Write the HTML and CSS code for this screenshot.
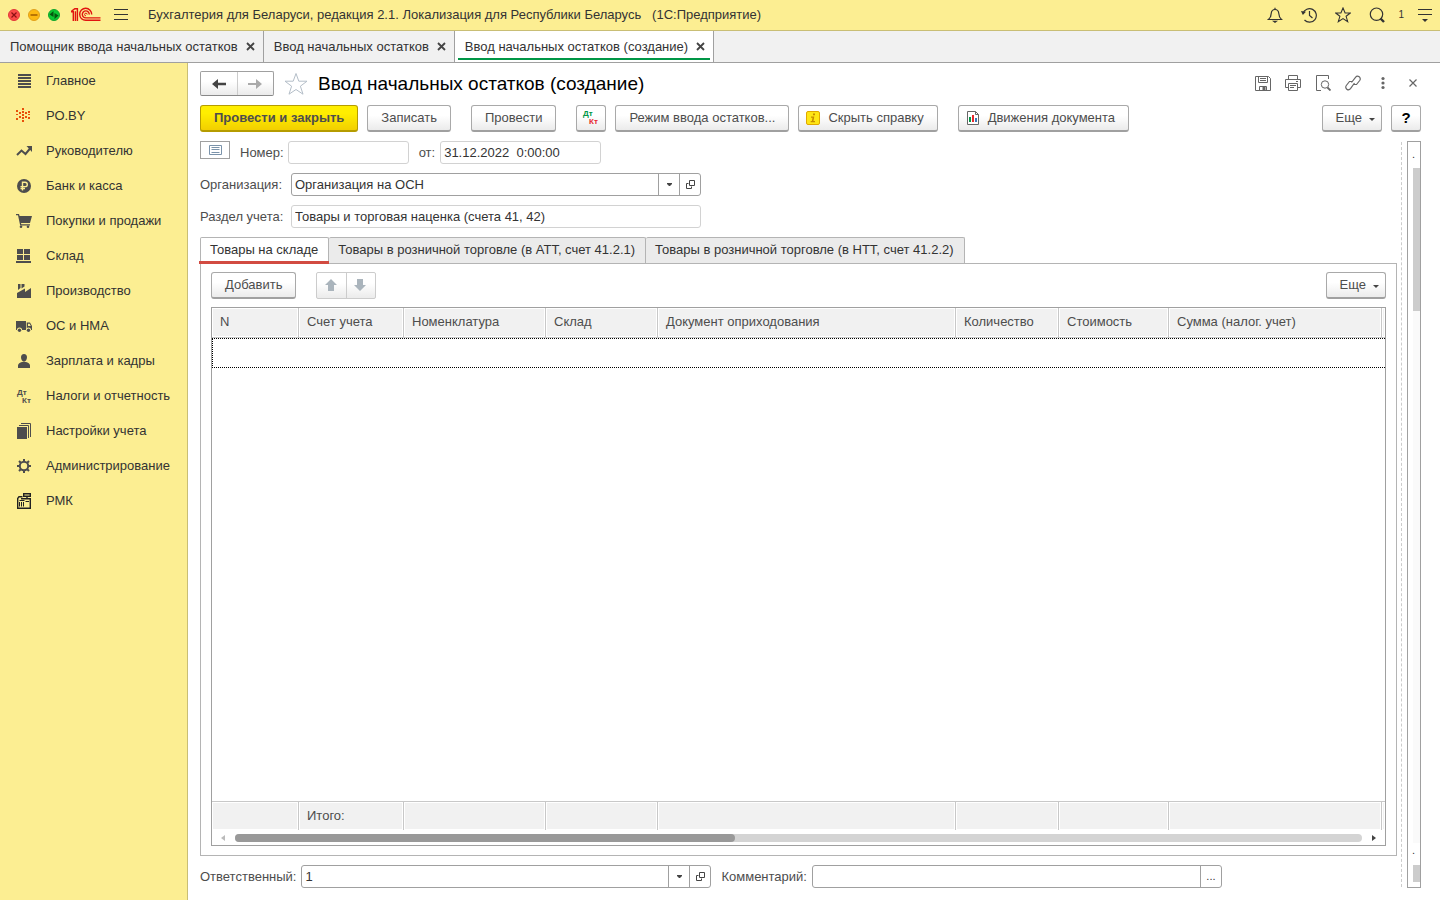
FILE: index.html
```html
<!DOCTYPE html>
<html lang="ru">
<head>
    <meta charset="UTF-8">
    <meta name="viewport" content="width=device-width, initial-scale=1.0">
    <title>Ввод начальных остатков (создание)</title>
    <link rel="stylesheet" href="styles.css">
</head>
<body>

<!-- Title bar -->
<header class="titlebar">
    <div class="window-buttons">
        <button type="button" aria-label="Закрыть окно"><svg width="12" height="12" viewBox="0 0 12 12"><circle cx="6" cy="6" r="5.5" fill="#fc4b48" stroke="#e0383a"/><path d="M3.5 3.5l5 5M8.5 3.5l-5 5" stroke="#8c1014" stroke-width="1.2"/></svg></button>
        <button type="button" aria-label="Свернуть"><svg width="12" height="12" viewBox="0 0 12 12"><circle cx="6" cy="6" r="5.5" fill="#fdb912" stroke="#e0a01c"/><path d="M2.5 6h7" stroke="#a86400" stroke-width="1.6"/></svg></button>
        <button type="button" aria-label="Развернуть"><svg width="12" height="12" viewBox="0 0 12 12"><circle cx="6" cy="6" r="5.5" fill="#0cc733" stroke="#12a52e"/><path d="M5.500 2v6L1.500 5.500zM6.500 10V4l4 2.500z" fill="#06550f"/></svg></button>
    </div>
    <svg class="logo" width="30" height="16" viewBox="0 0 30 16" fill="none" stroke="#e1140f" stroke-width="1.4"><path d="M0 4.700h2.300V14M.3 4.400L3.800 1.700h2.600V14M4.400 4.200V14"/><path d="M20.700 7.500A6 6 0 1 0 15 13.300h14.500M18.300 7.500A3.500 3.500 0 1 0 15 10.900h14.500"/><path d="M16.200 7.500a1.300 1.300 0 1 0 -1.300 1.300" stroke-width="1"/></svg>
    <button type="button" class="menu-button" aria-label="Меню"><svg width="14" height="12" viewBox="0 0 14 12" stroke="#333" fill="none"><path d="M0 .5h14M0 5.500h14M0 10.500h14"/></svg></button>
    <span class="app-title">Бухгалтерия для Беларуси, редакция 2.1. Локализация для Республики Беларусь &nbsp; (1С:Предприятие)</span>
    <div class="titlebar-tools">
        <button type="button" aria-label="Уведомления"><svg width="16" height="16" viewBox="0 0 16 16" fill="none" stroke="#333" stroke-width="1.2"><path d="M1.500 12.500c2-1.500 2.500-3 2.700-6C4.400 4 6 2.500 8 2.500s3.600 1.500 3.800 4c.2 3 .7 4.500 2.700 6z"/><path d="M8 .8v1.700"/><path d="M5 13.800h6L8 16z" fill="#333" stroke="none"/></svg></button>
        <button type="button" aria-label="История"><svg width="16" height="16" viewBox="0 0 16 16" fill="none" stroke="#333" stroke-width="1.2"><path d="M2 6.500A6.800 6.800 0 1 1 3.500 13"/><path d="M8.500 4v4.500l3 2.500"/><path d="M0 4l5 .8L1.800 8z" fill="#333" stroke="none"/></svg></button>
        <button type="button" aria-label="Избранное"><svg width="16" height="16" viewBox="0 0 16 16" fill="none" stroke="#333" stroke-width="1.1"><path d="M8 1l2.100 5h5.200l-4.200 3.300 1.600 5.400L8 11.600l-4.700 3.100 1.600-5.400L.7 6h5.200z"/></svg></button>
        <button type="button" aria-label="Поиск"><svg width="16" height="16" viewBox="0 0 16 16" fill="none" stroke="#333" stroke-width="1.200"><circle cx="7.500" cy="7.200" r="6.200"/><path d="M11.500 11.500l3.500 3.500" stroke-width="2.400"/></svg></button>
        <span class="counter">1</span>
        <button type="button" aria-label="Настройки окна"><svg width="14" height="14" viewBox="0 0 14 14"><path d="M0 1.500h14M0 6.500h14" stroke="#333"/><path d="M4 11h6l-3 3z" fill="#333"/></svg></button>
    </div>
</header>

<!-- Open windows -->
<nav class="window-tabs">
    <div class="window-tab"><a href="#">Помощник ввода начальных остатков</a><button type="button" aria-label="Закрыть"><svg width="9" height="9" viewBox="0 0 9 9"><path d="M1 1l7 7M8 1L1 8" stroke="#444" stroke-width="1.800"/></svg></button></div>
    <div class="window-tab"><a href="#">Ввод начальных остатков</a><button type="button" aria-label="Закрыть"><svg width="9" height="9" viewBox="0 0 9 9"><path d="M1 1l7 7M8 1L1 8" stroke="#444" stroke-width="1.800"/></svg></button></div>
    <div class="window-tab active"><a href="#">Ввод начальных остатков (создание)</a><button type="button" aria-label="Закрыть"><svg width="9" height="9" viewBox="0 0 9 9"><path d="M1 1l7 7M8 1L1 8" stroke="#444" stroke-width="1.800"/></svg></button></div>
</nav>

<div class="workspace">
    <!-- Sections -->
    <nav class="sidebar">
        <a href="#"><svg width="16" height="16" viewBox="0 0 16 16" fill="#4d4d4d"><path d="M2 1h13v2H2zM2 4h13v2H2zM2 7h13v2H2zM2 10h13v2H2zM2 13h13v2H2z"/></svg>Главное</a>
        <a href="#"><svg width="16" height="16" viewBox="0 0 16 16" fill="#e8500a"><path d="M6 0h2v2H6zM6 3h2v2H6zM6 6h2v2H6zM6 9h2v2H6zM6 12h2v2H6zM3 4h2v2H3zM3 8h2v2H3zM9 4h2v2H9zM9 8h2v2H9zM0 2h2v2H0zM0 6h2v1H0zM0 10h2v2H0zM12 3h2v2h-2zM12 6h2v1h-2zM12 9h2v2h-2z"/></svg>РО.BY</a>
        <a href="#"><svg width="16" height="16" viewBox="0 0 16 16"><path d="M1 12l4.500-4.500 4 3.500 5-6" fill="none" stroke="#4d4d4d" stroke-width="2"/><path d="M10.500 3H16v6z" fill="#4d4d4d"/></svg>Руководителю</a>
        <a href="#"><svg width="16" height="16" viewBox="0 0 16 16"><circle cx="8" cy="8" r="7" fill="#4d4d4d"/><path d="M6.500 12.500V4.200h2.600a2.200 2.200 0 0 1 0 4.400H4.500M4.500 10.500h4.500" fill="none" stroke="#fcee92" stroke-width="1.400"/></svg>Банк и касса</a>
        <a href="#"><svg width="16" height="16" viewBox="0 0 16 16" fill="#4d4d4d"><path d="M0 1h3l.6 2H16l-2 7H5l.3 1.200H14v1.300H4.200L2 2.300H0z"/><circle cx="5" cy="13.800" r="1.300"/><circle cx="12" cy="13.800" r="1.300"/></svg>Покупки и продажи</a>
        <a href="#"><svg width="16" height="16" viewBox="0 0 16 16" fill="#4d4d4d"><path d="M1 1h6v5H1zM8 1h6v5H8zM1 7h6v5H1zM8 7h6v5H8zM0 13h15v2H0z"/></svg>Склад</a>
        <a href="#"><svg width="16" height="16" viewBox="0 0 16 16" fill="#4d4d4d"><path d="M1 15V10l8-4.500V9l6-4v10zM2 1h2.500v4L2 7zM5.500 1H8.500v2.500L5.500 5.500z"/></svg>Производство</a>
        <a href="#"><svg width="16" height="16" viewBox="0 0 16 16" fill="#4d4d4d"><path d="M0 3h10v9H0zM10.700 4.500H14l2 3.500v4h-5.300z"/><path d="M12 5.700h1.600l1.200 2.300H12z" fill="#fcee92"/><circle cx="3.500" cy="12" r="2.600" fill="#fcee92"/><circle cx="12.500" cy="12" r="2.600" fill="#fcee92"/><circle cx="3.500" cy="12.300" r="1.700"/><circle cx="12.500" cy="12.300" r="1.700"/></svg>ОС и НМА</a>
        <a href="#"><svg width="16" height="16" viewBox="0 0 16 16" fill="#4d4d4d"><path d="M8 1c2 0 3 1.300 3 3.300S9.800 8.800 8 8.800 5 6.300 5 4.300 6 1 8 1zM2 15v-2.500c0-2 2-3 4-3.500h4c2 .5 4 1.500 4 3.500V15z"/></svg>Зарплата и кадры</a>
        <a href="#"><svg class="dtkt" width="16" height="16" viewBox="0 0 16 16" fill="#4d4d4d"><text x="1" y="7">Дт</text><text x="6" y="15">Кт</text></svg>Налоги и отчетность</a>
        <a href="#"><svg width="16" height="16" viewBox="0 0 16 16"><path d="M1 4h10v12H1z" fill="#4d4d4d"/><path d="M3 2.500h9.500V15M5 .5h9.500V14" fill="none" stroke="#4d4d4d"/></svg>Настройки учета</a>
        <a href="#"><svg width="16" height="16" viewBox="0 0 16 16" fill="none" stroke="#4d4d4d"><circle cx="8" cy="8" r="4.200" stroke-width="2"/><path d="M8 1v3M8 12v3M1 8h3M12 8h3M3 3l2 2M11 11l2 2M13 3l-2 2M5 11l-2 2" stroke-width="2"/></svg>Администрирование</a>
        <a href="#"><svg width="16" height="16" viewBox="0 0 16 16" fill="none" stroke="#222"><path d="M7.700 .7h6.600v2.600H7.700zM11 3.300V5.500M6.500 3.700H3L1.700 5.500v9.800h12.600V5.700H5" stroke-width="1.400"/><path d="M3.500 7.500h5M3.500 9v4.500M5.500 9v4.500M7.500 9v4.500M9.500 8.500h3.500"/></svg>РМК</a>
    </nav>

    <!-- Document form -->
    <main class="form">
        <div class="form-header">
            <div class="history">
                <button type="button" aria-label="Назад"><svg width="14" height="10" viewBox="0 0 14 10"><path d="M0 5l6-5v3.700h8v2.600H6V10z" fill="#444"/></svg></button>
                <button type="button" aria-label="Вперед"><svg width="14" height="10" viewBox="0 0 14 10"><path d="M14 5L8 0v4H0v2h8v4z" fill="#aaa"/></svg></button>
            </div>
            <button type="button" class="star" aria-label="В избранное"><svg width="24" height="24" viewBox="0 0 24 24" fill="none" stroke="#b4bec8"><path d="M12 1.500l2.800 7.700h8.200l-6.600 5 2.600 8-7-4.700-7 4.700 2.600-8-6.600-5h8.200z"/></svg></button>
            <h1>Ввод начальных остатков (создание)</h1>
            <div class="form-tools">
                <button type="button" aria-label="Сохранить"><svg width="16" height="16" viewBox="0 0 16 16" fill="none" stroke="#666"><path d="M.5 1.500h13l2 2v12h-15zM3.500 1.500v6h9v-6M5 3.500h6M5 5.500h6M4.500 15v-3.500h7V15"/><path d="M8 12h2v3H8z" fill="#666"/></svg></button>
                <button type="button" aria-label="Печать"><svg width="16" height="16" viewBox="0 0 16 16" fill="none" stroke="#666"><path d="M3.500 4.500v-4h9v4M3.500 12.500h-3v-8h15v8h-3M3.500 8.500h9v7h-9zM5 10.500h6M5 12.500h4M11 6.500h2"/></svg></button>
                <button type="button" aria-label="Просмотр"><svg width="16" height="16" viewBox="0 0 16 16" fill="none" stroke="#666"><path d="M6 15.500H1.500V.5h12V4"/><circle cx="10" cy="9.500" r="3.700"/><path d="M12.500 12.500l3 3" stroke-width="1.800"/></svg></button>
                <button type="button" aria-label="Ссылка"><svg width="16" height="16" viewBox="0 0 16 16" fill="none" stroke="#666" stroke-width="1.200"><path d="M6.500 7.500l4-5.200a2.600 2.600 0 0 1 4.200 3.200L11.500 9.500H9M9.500 8l-4 5.700A2.600 2.600 0 0 1 1.300 10.500L4.500 6.500H7"/></svg></button>
                <button type="button" aria-label="Еще"><svg width="16" height="16" viewBox="0 0 16 16" fill="#666"><circle cx="8" cy="3.500" r="1.600"/><circle cx="8" cy="8" r="1.600"/><circle cx="8" cy="12.500" r="1.600"/></svg></button>
                <button type="button" aria-label="Закрыть"><svg width="16" height="16" viewBox="0 0 16 16" stroke="#666" stroke-width="1.200"><path d="M4.500 4.500l7 7M11.500 4.500l-7 7"/></svg></button>
            </div>
        </div>

        <div class="toolbar">
            <div class="group">
                <button type="button" class="btn primary">Провести и закрыть</button>
                <button type="button" class="btn">Записать</button>
            </div>
            <button type="button" class="btn">Провести</button>
            <div class="group">
                <button type="button" class="btn square" aria-label="Показать проводки"><svg class="dtkt" width="18" height="16" viewBox="0 0 18 16"><text x="1" y="6" fill="#009646">Дт</text><text x="7" y="14" fill="#e6282d">Кт</text></svg></button>
                <button type="button" class="btn">Режим ввода остатков...</button>
                <button type="button" class="btn with-icon"><svg width="14" height="14" viewBox="0 0 14 14"><rect x=".5" y=".5" width="13" height="13" rx="1.500" fill="#ffe614" stroke="#e0a800"/><path d="M7 2.500h2v1.800H7zM5 5.500h3.300L7.500 10H9v1.200H4.700V10h1.200l.6-3.300H5z" fill="#c88c00"/></svg>Скрыть справку</button>
            </div>
            <button type="button" class="btn with-icon"><svg width="14" height="14" viewBox="0 0 14 14"><path d="M1.500 .5h8l3 3v10h-11z" fill="#fff" stroke="#666"/><path d="M9.500 .5v3h3" fill="none" stroke="#666"/><path d="M3 6h2v5H3z" fill="#009646"/><path d="M6 4h2v7H6z" fill="#e6282d"/><path d="M9 7h2v4H9z" fill="#3c78b4"/></svg>Движения документа</button>
            <div class="group right">
                <button type="button" class="btn more">Еще<svg width="6" height="3" viewBox="0 0 6 3"><path d="M0 0h6L3 3z" fill="#444"/></svg></button>
                <button type="button" class="btn square help">?</button>
            </div>
        </div>

        <div class="form-body">
            <div class="form-content">
                <div class="field-row">
                    <button type="button" class="list-button" aria-label="Список"><svg width="13" height="10" viewBox="0 0 13 10" fill="none" stroke="#7b93aa"><path d="M.5 .5h12v9H.5zM2.500 2.500h8M2.500 4.500h8M2.500 7.500h8"/></svg></button>
                    <label for="number">Номер:</label>
                    <input id="number" class="box number" type="text">
                    <label for="date" class="date-label">от:</label>
                    <input id="date" class="box date" type="text" value="31.12.2022  0:00:00">
                </div>
                <div class="field-row">
                    <label for="org" class="wide">Организация:</label>
                    <div class="combo">
                        <input id="org" type="text" value="Организация на ОСН">
                        <button type="button" aria-label="Выбрать"><svg width="5" height="3" viewBox="0 0 5 3"><path d="M0 0h5v1L3 3H2L0 1z" fill="#444"/></svg></button>
                        <button type="button" aria-label="Открыть"><svg width="9" height="9" viewBox="0 0 9 9" fill="none" stroke="#444"><path d="M3.500 .5h5v5h-5zM2.500 3.500h-2v5h5v-2"/></svg></button>
                    </div>
                </div>
                <div class="field-row">
                    <label for="section" class="wide">Раздел учета:</label>
                    <input id="section" class="box section" type="text" value="Товары и торговая наценка (счета 41, 42)">
                </div>

                <div class="page-tabs" role="tablist">
                    <button type="button" role="tab" class="active" aria-selected="true">Товары на складе</button>
                    <button type="button" role="tab">Товары в розничной торговле (в АТТ, счет 41.2.1)</button>
                    <button type="button" role="tab">Товары в розничной торговле (в НТТ, счет 41.2.2)</button>
                </div>

                <div class="page">
                    <div class="page-toolbar">
                        <button type="button" class="btn">Добавить</button>
                        <div class="move">
                            <button type="button" aria-label="Вверх" disabled><svg width="12" height="12" viewBox="0 0 12 12"><path d="M6 0l6 6H9v6H3V6H0z" fill="#aab4bc"/></svg></button>
                            <button type="button" aria-label="Вниз" disabled><svg width="12" height="12" viewBox="0 0 12 12"><path d="M6 12l6-6H9V0H3v6H0z" fill="#aab4bc"/></svg></button>
                        </div>
                        <button type="button" class="btn more right">Еще<svg width="6" height="3" viewBox="0 0 6 3"><path d="M0 0h6L3 3z" fill="#444"/></svg></button>
                    </div>

                    <div class="grid">
                        <div class="grid-rows">
                            <table>
                                <colgroup>
                                    <col class="c-n"><col class="c-account"><col class="c-item"><col class="c-store"><col class="c-doc"><col class="c-qty"><col class="c-cost"><col class="c-sum"><col>
                                </colgroup>
                                <thead>
                                    <tr><th>N</th><th>Счет учета</th><th>Номенклатура</th><th>Склад</th><th>Документ оприходования</th><th>Количество</th><th>Стоимость</th><th>Сумма (налог. учет)</th><th></th></tr>
                                </thead>
                                <tbody>
                                    <tr class="current"><td colspan="9"></td></tr>
                                    <tr><td colspan="9"></td></tr>
                                </tbody>
                                <tfoot>
                                    <tr><td></td><td>Итого:</td><td></td><td></td><td></td><td></td><td></td><td></td><td></td></tr>
                                </tfoot>
                            </table>
                        </div>
                        <div class="hscroll">
                            <svg width="4" height="6" viewBox="0 0 4 6"><path d="M4 0v6L0 3z" fill="#bbb"/></svg>
                            <div class="track"><div class="thumb"></div></div>
                            <svg width="4" height="6" viewBox="0 0 4 6"><path d="M0 0v6l4-3z" fill="#444"/></svg>
                        </div>
                    </div>
                </div>

                <div class="field-row footer-row">
                    <label for="responsible">Ответственный:</label>
                    <div class="combo">
                        <input id="responsible" type="text" value="1">
                        <button type="button" aria-label="Выбрать"><svg width="5" height="3" viewBox="0 0 5 3"><path d="M0 0h5v1L3 3H2L0 1z" fill="#444"/></svg></button>
                        <button type="button" aria-label="Открыть"><svg width="9" height="9" viewBox="0 0 9 9" fill="none" stroke="#444"><path d="M3.500 .5h5v5h-5zM2.500 3.500h-2v5h5v-2"/></svg></button>
                    </div>
                    <label for="comment" class="comment-label">Комментарий:</label>
                    <div class="combo">
                        <input id="comment" type="text">
                        <button type="button">...</button>
                    </div>
                </div>
            </div>

            <!-- Collapsed help panel -->
            <aside class="help-strip">
                <span>.</span>
                <div class="vtrack"><div class="vthumb"></div></div>
                <span>.</span>
                <div class="corner"></div>
            </aside>
        </div>
    </main>
</div>

</body>
</html>
```

FILE: styles.css
```css
* {
    box-sizing: border-box;
}

body {
    margin: 0;
    height: 100vh;
    display: flex;
    flex-direction: column;
    font-family: "Liberation Sans", Arial, sans-serif;
    font-size: 13px;
    line-height: 16px;
    color: #333;
    background-color: white;
    overflow: hidden;
}

button, input {
    font: inherit;
    color: inherit;
    margin: 0;
    padding: 0;
    border: 0;
    background: none;
}

input {
    min-width: 0;
    outline: none;
}

svg {
    display: block;
    flex: none;
}

a {
    color: inherit;
    text-decoration: none;
}

.dtkt {
    font-size: 8px;
    font-weight: bold;
}

/* Title bar */
.titlebar {
    flex: none;
    display: flex;
    align-items: center;
    height: 31px;
    padding: 0 8px;
    background-color: #fcee92;
    border-bottom: 1px solid #c9be75;
}

.window-buttons {
    display: flex;
    gap: 8px;
}

.logo {
    margin-left: 11px;
}

.menu-button {
    margin-left: 13px;
}

.app-title {
    margin-left: 20px;
    white-space: nowrap;
}

.titlebar-tools {
    margin-left: auto;
    display: flex;
    align-items: center;
    gap: 18px;
}

.counter {
    font-size: 10px;
    margin: 0 -4px 0 -5px;
}

/* Window tabs */
.window-tabs {
    flex: none;
    display: flex;
    height: 32px;
    background-color: #f1f1f1;
    border-bottom: 1px solid #a0a0a0;
}

.window-tab {
    display: flex;
    align-items: center;
    gap: 8px;
    padding: 0 8px 0 10px;
    border-right: 1px solid #a0a0a0;
    white-space: nowrap;
}

.window-tab.active {
    position: relative;
    background-color: white;
}

.window-tab.active::after {
    content: "";
    position: absolute;
    left: 3px;
    right: 3px;
    bottom: 2px;
    height: 2px;
    background-color: #009646;
}

.workspace {
    flex: 1;
    min-height: 0;
    display: flex;
}

/* Sections */
.sidebar {
    flex: none;
    width: 188px;
    background-color: #fcee92;
    border-right: 1px solid #c9be75;
}

.sidebar a {
    display: flex;
    align-items: center;
    gap: 14px;
    height: 35px;
    padding-left: 16px;
    white-space: nowrap;
}

/* Form */
.form {
    flex: 1;
    min-width: 0;
    display: flex;
    flex-direction: column;
    gap: 9px;
    padding: 8px 19px 12px 12px;
    color: #4d4d4d;
}

.form-header {
    display: flex;
    align-items: center;
    height: 25px;
}

.history, .move {
    display: flex;
    border: 1px solid #a0a0a0;
    border-bottom-color: #888;
    border-radius: 2px;
    background: linear-gradient(white 40%, #ebebeb);
}

.history {
    width: 74px;
    height: 25px;
}

.history button, .move button {
    flex: 1;
    display: flex;
    align-items: center;
    justify-content: center;
}

.history button + button, .move button + button {
    border-left: 1px solid #ccc;
}

.star {
    margin-left: 10px;
}

h1 {
    margin: 0 0 0 10px;
    font-size: 19px;
    line-height: 24px;
    font-weight: normal;
    color: black;
    white-space: nowrap;
}

.form-tools {
    margin-left: auto;
    display: flex;
    gap: 14px;
    padding-bottom: 2px;
}

.toolbar {
    display: flex;
    gap: 20px;
}

.group {
    display: flex;
    gap: 9px;
}

.right {
    margin-left: auto;
}

.btn {
    display: flex;
    align-items: center;
    justify-content: center;
    height: 27px;
    padding: 0 13px;
    border: 1px solid #a9a9a9;
    border-bottom: 2px solid #a0a0a0;
    border-radius: 3px;
    background: linear-gradient(white 40%, #ebebeb);
    white-space: nowrap;
}

.btn.primary {
    font-weight: bold;
    background: linear-gradient(#ffee00 30%, #f2cf00);
    border-color: #b59c00;
}

.btn.square {
    width: 30px;
    padding: 0;
}

.btn.with-icon {
    gap: 8px;
    padding-left: 7px;
}

.btn.more {
    gap: 7px;
    padding-right: 6px;
}

.btn.more svg {
    margin-top: 3px;
}

.btn.help {
    font-size: 15px;
    font-weight: bold;
    color: black;
}

.form-body {
    flex: 1;
    min-height: 0;
    display: flex;
}

.form-content {
    flex: 1;
    min-width: 0;
    display: flex;
    flex-direction: column;
    gap: 9px;
}

/* Fields */
.field-row {
    display: flex;
    align-items: center;
    height: 23px;
    white-space: nowrap;
}

.list-button {
    align-self: flex-start;
    display: flex;
    align-items: center;
    justify-content: center;
    width: 30px;
    height: 18px;
    margin-right: 10px;
    border: 1px solid #a0a0a0;
}

.wide {
    width: 91px;
}

.box {
    height: 23px;
    padding: 0 3px;
    border: 1px solid #d2d2d2;
    border-radius: 3px;
    color: #333;
}

.number {
    width: 121px;
    margin-left: 4px;
}

.date-label {
    margin-left: 10px;
}

.date {
    width: 161px;
    margin-left: 5px;
}

.section {
    width: 410px;
}

.combo {
    display: flex;
    width: 410px;
    height: 23px;
    border: 1px solid #a0a0a0;
    border-radius: 3px;
    color: #333;
}

.combo input {
    flex: 1;
    padding: 0 3px;
}

.combo button {
    display: flex;
    align-items: center;
    justify-content: center;
    width: 21px;
    padding-bottom: 1px;
    border-left: 1px solid #a0a0a0;
    font-size: 11px;
}

.footer-row .combo {
    margin-left: 5px;
}

.comment-label {
    margin-left: 10px;
}

/* Pages */
.page-tabs {
    display: flex;
    color: #333;
}

.page-tabs button {
    height: 26px;
    padding: 0 10px 2px 9px;
    border: 1px solid #b4b4b4;
    border-bottom: 0;
    border-radius: 2px 2px 0 0;
    background-color: #ebebeb;
    white-space: nowrap;
}

.page-tabs button + button {
    border-left: 0;
}

.page-tabs button.active {
    position: relative;
    background-color: white;
}

.page-tabs button.active::after {
    content: "";
    position: absolute;
    left: -2px;
    right: -1px;
    bottom: -1px;
    height: 3px;
    background-color: #d24b41;
}

.page {
    flex: 1;
    min-height: 0;
    display: flex;
    flex-direction: column;
    gap: 8px;
    margin-top: -9px;
    padding: 8px 10px 9px;
    border: 1px solid #b4b4b4;
}

.page-toolbar {
    display: flex;
}

.move {
    width: 60px;
    height: 27px;
    margin-left: 20px;
    border-color: #ccc;
}

.move button {
    padding-right: 2px;
    padding-bottom: 1px;
}

/* Goods table */
.grid {
    flex: 1;
    min-height: 0;
    display: flex;
    flex-direction: column;
    border: 1px solid #a0a0a0;
}

.grid-rows {
    flex: 1;
    min-height: 0;
    overflow: hidden;
}

table {
    width: 100%;
    height: 100%;
    table-layout: fixed;
    border-collapse: separate;
    border-spacing: 0;
}

th, td {
    padding: 0;
    text-align: left;
    font-weight: normal;
    white-space: nowrap;
}

thead tr, tbody .current {
    height: 30px;
}

tfoot tr {
    height: 29px;
}

thead th, tfoot td {
    padding: 0 8px;
    background-color: #f1f1f1;
    border-right: 1px solid #c8c8c8;
    box-shadow: inset 0 0 0 1px white;
}

thead th {
    padding-bottom: 2px;
    border-bottom: 1px solid #c8c8c8;
}

tfoot td {
    border-top: 1px solid #c8c8c8;
}

thead th:last-child, tfoot td:last-child {
    padding: 0;
    border-right: 0;
}

.current td {
    border: 1px dotted black;
    border-right: 0;
}

.c-n { width: 87px; }
.c-account { width: 105px; }
.c-item { width: 142px; }
.c-store { width: 112px; }
.c-doc { width: 298px; }
.c-qty { width: 103px; }
.c-cost { width: 110px; }
.c-sum { width: 213px; }

.hscroll {
    flex: none;
    display: flex;
    align-items: center;
    gap: 10px;
    height: 15px;
    padding: 0 9px;
}

.track {
    flex: 1;
    height: 8px;
    border-radius: 4px;
    background-color: #d4d4d4;
}

.thumb {
    width: 500px;
    height: 8px;
    border-radius: 4px;
    background-color: #999;
}

/* Help panel */
.help-strip {
    flex: none;
    display: flex;
    flex-direction: column;
    align-items: flex-end;
    position: relative;
    width: 14px;
    margin-left: 10px;
    padding-bottom: 5px;
    border: 1px solid #a0a0a0;
    font-size: 11px;
    line-height: 14px;
    color: #333;
}

.help-strip::before {
    content: "";
    position: absolute;
    top: 0;
    bottom: 0;
    left: -7px;
    border-left: 1px dashed #ccc;
}

.help-strip span {
    width: 8px;
    height: 22px;
}

.help-strip span:first-child {
    height: 26px;
    padding-top: 5px;
}

.vtrack {
    flex: 1;
    width: 7px;
    background-color: #fafafa;
}

.vthumb {
    height: 143px;
    background-color: #ccc;
}

.corner {
    width: 7px;
    height: 17px;
    background-color: #ccc;
}
```
